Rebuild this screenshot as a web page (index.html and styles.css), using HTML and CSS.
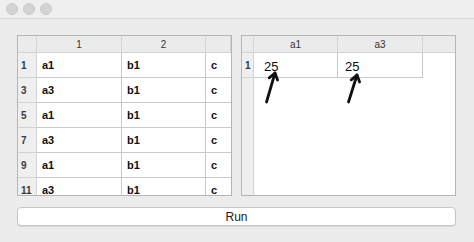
FILE: index.html
```html
<!DOCTYPE html>
<html>
<head>
<meta charset="utf-8">
<link rel="stylesheet" href="styles.css">
</head>
<body>
<div class="window">
  <div class="titlebar">
    <span class="light"></span><span class="light"></span><span class="light"></span>
  </div>
  <div class="content">
    <div class="panes">
      <div class="pane left">
        <div class="corner"></div><div class="hcell">1</div><div class="hcell">2</div><div class="hcell"></div>
        <div class="rnum">1</div><div class="cell">a1</div><div class="cell">b1</div><div class="cell">c</div>
        <div class="rnum">3</div><div class="cell">a3</div><div class="cell">b1</div><div class="cell">c</div>
        <div class="rnum">5</div><div class="cell">a1</div><div class="cell">b1</div><div class="cell">c</div>
        <div class="rnum">7</div><div class="cell">a3</div><div class="cell">b1</div><div class="cell">c</div>
        <div class="rnum">9</div><div class="cell">a1</div><div class="cell">b1</div><div class="cell">c</div>
        <div class="rnum">11</div><div class="cell">a3</div><div class="cell">b1</div><div class="cell">c</div>
      </div>
      <div class="pane right">
        <div class="corner"></div><div class="hcell">a1</div><div class="hcell">a3</div><div class="hcell hfill"></div>
        <div class="rnum">1</div><div class="cell val first">25</div><div class="cell val second">25</div><div class="blank"></div>
        <div class="rfill"></div><div class="wfill"></div>
        <svg class="arrows" width="215" height="161" viewBox="0 0 215 161">
          <g fill="none" stroke="#111" stroke-width="2.8" stroke-linecap="round" stroke-linejoin="round">
            <path d="M24.5 66 L33 37"/>
            <path d="M27.2 41.8 L33 37 L35.6 44"/>
            <path d="M106.5 66 L115 39"/>
            <path d="M109.2 43.8 L115 39 L117.6 46"/>
          </g>
        </svg>
      </div>
    </div>
    <button class="run">Run</button>
  </div>
</div>
</body>
</html>
```

FILE: styles.css
```css
* { box-sizing: border-box; }
html, body { margin: 0; padding: 0; }
body {
  width: 474px;
  height: 242px;
  overflow: hidden;
  background: #ececec;
  font-family: "Liberation Sans", Arial, sans-serif;
}
.window {
  width: 474px;
  height: 242px;
  display: flex;
  flex-direction: column;
}
.titlebar {
  height: 19px;
  background: #efefef;
  border-bottom: 1px solid #d9d9d9;
  display: flex;
  align-items: center;
  gap: 5px;
  padding: 0 0 1px 6px;
}
.light {
  width: 12px;
  height: 12px;
  border-radius: 50%;
  background: #d3d3d3;
  border: 1px solid #cacaca;
}
.content {
  flex: 1;
  padding: 16px 18px 0 17px;
  display: flex;
  flex-direction: column;
  gap: 11px;
}
.panes {
  display: flex;
  gap: 9px;
  height: 161px;
}
.pane {
  width: 215px;
  height: 161px;
  border: 1px solid #b5b5b5;
  background: #fff;
  overflow: hidden;
  display: grid;
}
.left {
  grid-template-columns: 19px 85px 84px 1fr;
  grid-template-rows: 17px repeat(6, 25px);
}
.right {
  position: relative;
  grid-template-columns: 12px 84px 85px 1fr;
  grid-template-rows: 17px 25px 1fr;
}
.corner {
  background: #ebebeb;
  border-right: 1px solid #d4d4d4;
  border-bottom: 1px solid #d4d4d4;
}
.hcell {
  background: #ebebeb;
  border-right: 1px solid #d4d4d4;
  border-bottom: 1px solid #d4d4d4;
  font-size: 10px;
  color: #333;
  display: flex;
  align-items: center;
  justify-content: center;
}
.hcell.hfill { border-right: none; }
.rnum {
  background: #efefef;
  border-right: 1px solid #d4d4d4;
  border-bottom: 1px solid #d4d4d4;
  font-size: 10px;
  font-weight: bold;
  color: #3a3a3a;
  display: flex;
  align-items: center;
  padding-left: 3px;
}
.cell {
  border-right: 1px solid #c9c9c9;
  border-bottom: 1px solid #c9c9c9;
  font-size: 11px;
  font-weight: bold;
  color: #111;
  display: flex;
  align-items: center;
  padding-left: 5px;
}
.left .cell:nth-child(4n) { border-right: none; }
.cell.val {
  font-size: 13px;
  font-weight: normal;
  color: #0a0a0a;
  padding-top: 3px;
}
.cell.first { padding-left: 10px; }
.cell.second { padding-left: 7px; }
.blank { background: #fff; }
.rfill {
  background: #efefef;
  border-right: 1px solid #d4d4d4;
}
.wfill {
  grid-column: 2 / 5;
  background: #fff;
}
.arrows {
  position: absolute;
  left: 0;
  top: 0;
  pointer-events: none;
}
.run {
  height: 19px;
  width: 439px;
  margin: 0;
  padding: 0;
  background: #fff;
  border: 1px solid #c6c6c6;
  border-radius: 4px;
  font-family: "Liberation Sans", Arial, sans-serif;
  font-size: 12px;
  color: #222;
  box-shadow: 0 1px 0 #d8d8d8;
}
```
